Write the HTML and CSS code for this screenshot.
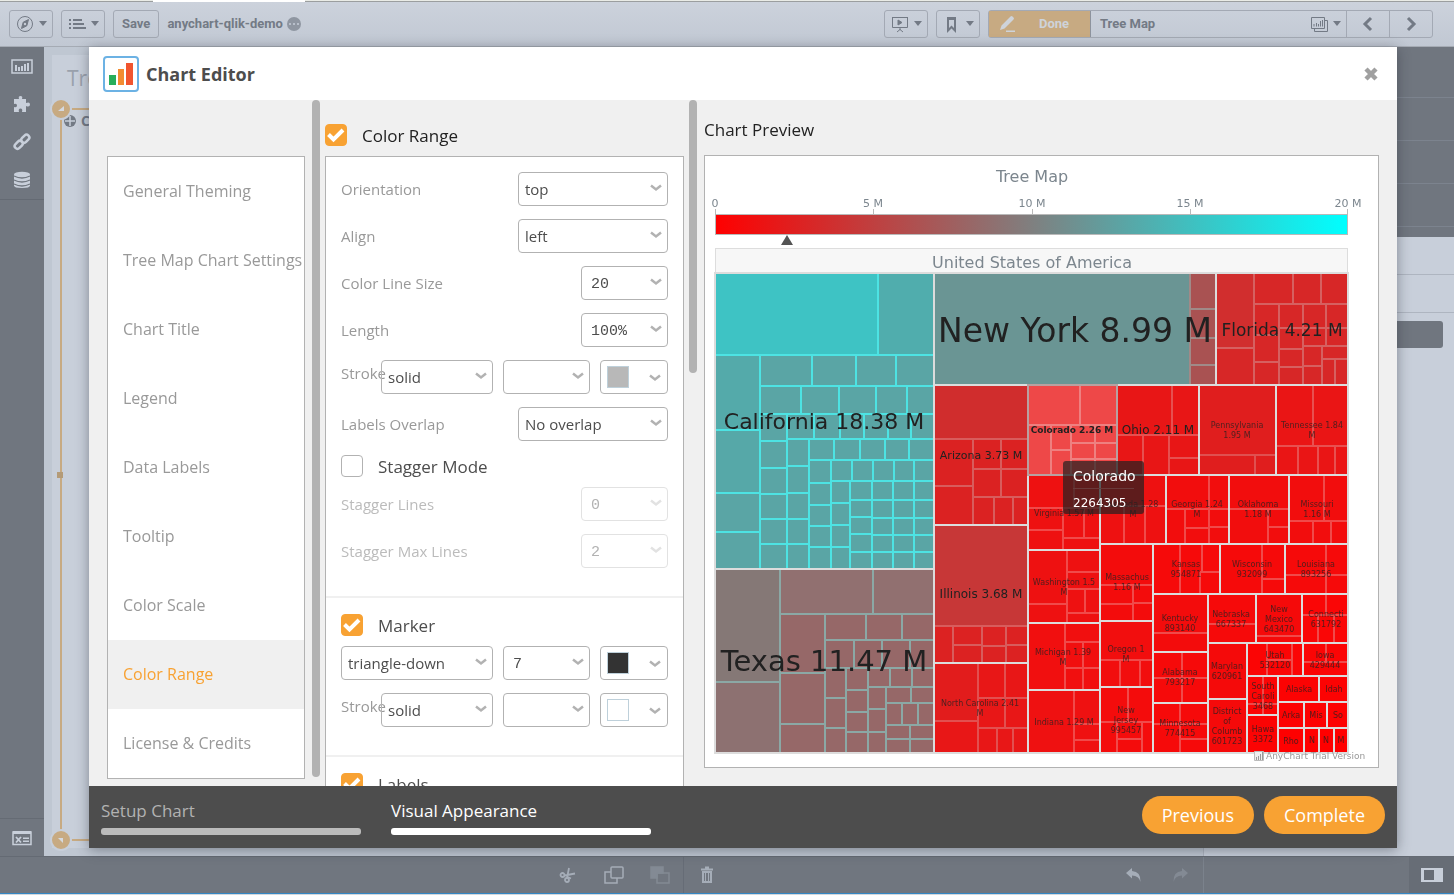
FILE: index.html
```html
<!DOCTYPE html>
<html lang="en">
<head>
  <meta charset="UTF-8">
  <meta name="viewport" content="width=device-width, initial-scale=1.0">
  <title>Chart Editor</title>
  <link rel="stylesheet" href="styles.css">
</head>
<body>
  <div class="app">
    <div class="tab-strip"><span class="tab-active"></span></div>

    <header class="toolbar">
      <button class="tool-btn" aria-label="Navigation">
        <svg width="18" height="18" viewBox="0 0 18 18" fill="none" stroke="currentColor"><circle cx="9" cy="9" r="7.5"/><path d="M12.5 4.5L10.8 10.8 5.5 13.5 7.2 7.2Z" fill="currentColor"/><circle cx="9" cy="9" r="1.2" fill="#c6ccd7" stroke="none"/></svg>
        <span class="caret"></span>
      </button>
      <button class="tool-btn" aria-label="Menu">
        <svg width="18" height="18" viewBox="0 0 18 18" fill="currentColor"><path d="M1 4h2v2H1zM1 8h2v2H1zM1 12h2v2H1zM5 4h9v2H5zM5 8h11v2H5zM5 12h13v2H5z"/></svg>
        <span class="caret"></span>
      </button>
      <button class="tool-btn save">Save</button>
      <span class="app-name">anychart-qlik-demo</span>
      <span class="app-dot"><i></i><i></i><i></i></span>
      <div class="toolbar-right">
        <button class="tool-btn" aria-label="Play story">
          <svg width="18" height="18" viewBox="0 0 18 18" fill="none" stroke="currentColor"><path d="M1 2.500H17M1.500 2.500V12.500H16.500V2.500M9 12.500V15M6 17L9 14.500 12 17"/><path d="M7 5L11 7.500 7 10Z" fill="currentColor"/></svg>
          <span class="caret"></span>
        </button>
        <button class="tool-btn" aria-label="Bookmarks">
          <svg width="18" height="18" viewBox="0 0 18 18" fill="none" stroke="currentColor" stroke-width="2"><path d="M5 3H12V15.500L8.500 12 5 15.500Z"/><path d="M5 3.500H12" stroke-width="3"/></svg>
          <span class="caret"></span>
        </button>
        <div class="sheet-bar">
          <button class="done-btn">
            <svg width="18" height="18" viewBox="0 0 18 18" fill="currentColor"><path d="M1 15L2.500 10.500 11.500 1.500Q12.500.5 13.500 1.500L14.500 2.500Q15.500 3.500 14.500 4.500L5.500 13.500ZM7 15.500H16V17H7Z"/></svg>
            <span>Done</span>
          </button>
          <span class="sheet-name">Tree Map</span>
          <button class="bar-btn" aria-label="Sheets">
            <svg width="18" height="18" viewBox="0 0 18 18" fill="none" stroke="currentColor"><path d="M1.500 2.500H14.500V13.500H1.500ZM14.500 5.500H17.500V16.500H4.500V13.500M4 11.500V9M6.500 11.500V8M8.500 11.500V9M10.500 11.500V6M12.500 11.500V5"/></svg>
            <span class="caret"></span>
          </button>
          <button class="bar-btn step" aria-label="Previous sheet">
            <svg width="14" height="16" viewBox="0 0 14 16" fill="none" stroke="currentColor" stroke-width="3"><path d="M10 2L4 8 10 14"/></svg>
          </button>
          <button class="bar-btn step" aria-label="Next sheet">
            <svg width="14" height="16" viewBox="0 0 14 16" fill="none" stroke="currentColor" stroke-width="3"><path d="M4 2L10 8 4 14"/></svg>
          </button>
        </div>
      </div>
    </header>

    <div class="workspace">
      <aside class="rail">
        <div class="rail-top">
          <svg width="22" height="16" viewBox="0 0 22 16"><path d="M1 1H21V14H1Z" fill="none" stroke="currentColor" stroke-width="1.500"/><path d="M4 6h2v6H4zM7 8h2v4H7zM10 7h2v5h-2zM13 5h2v7h-2zM16 4h2v8h-2z" fill="currentColor"/></svg>
          <svg width="18" height="18" viewBox="0 0 18 18" fill="currentColor"><path d="M1 4H6Q5 1 7.500 1T9 4H13V8Q17 6.500 17 9.500T13 11V17H9Q10 13.500 7.500 13.500T6 17H1V12Q4 13 4 10.500T1 9Z"/></svg>
          <svg width="18" height="18" viewBox="0 0 18 18" fill="none" stroke="currentColor" stroke-width="2.500"><rect x="-3.500" y="-2.800" width="9" height="5.600" rx="2.800" transform="translate(5 12.500) rotate(-45)"/><rect x="-5.500" y="-2.800" width="9" height="5.600" rx="2.800" transform="translate(13 5) rotate(-45)"/></svg>
          <svg width="18" height="18" viewBox="0 0 18 18"><path d="M1 3.500V14.500Q1 17 9 17T17 14.500V3.500Z" fill="currentColor"/><ellipse cx="9" cy="3.500" rx="8" ry="2.700" fill="currentColor"/><path d="M1 5Q9 9 17 5M1 9Q9 13 17 9M1 13Q9 17 17 13" fill="none" stroke="#70767f" stroke-width="1.300"/></svg>
        </div>
        <div class="rail-bottom">
          <svg width="20" height="16" viewBox="0 0 20 16"><path d="M1 2H19V14.500H1Z" fill="none" stroke="currentColor" stroke-width="1.500"/><path d="M1 1H19V4H1ZM11 7.500H17V9H11ZM11 10.500H17V12H11Z" fill="currentColor"/><path d="M4 7L9 12.500M9 7L4 12.500" stroke="currentColor" stroke-width="1.800"/></svg>
        </div>
      </aside>
      <main class="canvas">
        <div class="sheet">
          <h2>Tree Map</h2>
          <div class="object-title">
            <svg width="12" height="12" viewBox="0 0 12 12"><circle cx="6" cy="6" r="6" fill="currentColor"/><path d="M6 1V11M1 6H11" stroke="#c8cfda" stroke-width="1.500"/></svg>
            Chart
          </div>
          <span class="frame"></span>
          <svg class="handle handle-top" width="22" height="22" viewBox="0 0 22 22"><circle cx="11" cy="11" r="10"/><path d="M14 8V13H8Z"/></svg>
          <svg class="handle handle-bottom" width="22" height="22" viewBox="0 0 22 22"><circle cx="11" cy="11" r="10"/><path d="M8 9H13V14Z"/></svg>
          <span class="knob"></span>
        </div>
      </main>
      <aside class="props">
        <ul class="props-top"><li></li><li></li><li></li><li></li></ul>
        <div class="props-row"></div>
        <div class="props-row"></div>
        <div class="props-tab"></div>
      </aside>
    </div>

    <footer class="statusbar">
      <div class="edit-tools">
        <button class="icon-btn" aria-label="Cut"><svg width="18" height="18" viewBox="0 0 18 18" fill="none" stroke="currentColor" stroke-width="1.800"><circle cx="3.500" cy="9" r="2"/><circle cx="8" cy="14" r="2"/><path d="M5.500 9.500L16 7.500M8 12L10 2M8.500 11L12 12.500"/></svg></button>
        <button class="icon-btn" aria-label="Copy"><svg width="20" height="18" viewBox="0 0 20 18" fill="none" stroke="currentColor" stroke-width="1.500"><rect x="7" y="1" width="12" height="11" rx="1"/><path d="M7 6H1V17H13V12"/></svg></button>
        <button class="icon-btn dim" aria-label="Paste"><svg width="20" height="18" viewBox="0 0 20 18" fill="none" stroke="currentColor" stroke-width="1.500"><path d="M1 1H13V7H7V12H1Z" fill="currentColor"/><path d="M7 7H19V17H7Z"/></svg></button>
        <button class="icon-btn split" aria-label="Delete"><svg width="14" height="18" viewBox="0 0 14 18" fill="none" stroke="currentColor" stroke-width="2"><path d="M1 3.500H13M5 1.500H9M2 6H12M3 6V16H11V6"/><path d="M5.500 7V15M8.500 7V15" stroke-width="1"/></svg></button>
      </div>
      <div class="undo-tools">
        <button class="icon-btn" aria-label="Undo"><svg width="16" height="16" viewBox="0 0 16 16" fill="currentColor"><path d="M0 6L6 1V4Q15 4.500 14.500 15 13 8.500 6 8.500V11.500Z"/></svg></button>
        <button class="icon-btn dim" aria-label="Redo"><svg width="16" height="16" viewBox="0 0 16 16" fill="currentColor"><path d="M16 6L10 1V4Q1 4.500 1.500 15 3 8.500 10 8.500V11.500Z"/></svg></button>
      </div>
      <div class="panel-tools">
        <button class="panel-toggle" aria-label="Toggle panel"><svg width="22" height="14" viewBox="0 0 22 14"><path d="M0 0H22V14H0ZM3 2V12H13V2Z" fill="currentColor" fill-rule="evenodd"/></svg></button>
      </div>
    </footer>
    <div class="window-edge"></div>
  </div>

  <section class="modal" role="dialog" aria-labelledby="dialog-title">
    <header class="modal-header">
      <svg class="logo" width="36" height="36" viewBox="0 0 36 36"><rect x="1" y="1" width="34" height="34" rx="3" fill="#fff" stroke="#6cb2e4" stroke-width="2"/><path d="M6 19H13V29H6Z" fill="#27ae5b"/><path d="M15 13H21V29H15Z" fill="#f28c32"/><path d="M23 7H30V29H23Z" fill="#f1552f"/></svg>
      <h1 id="dialog-title">Chart Editor</h1>
      <button class="close" aria-label="Close"><svg width="16" height="16" viewBox="0 0 16 16"><path d="M3 3L13 13M13 3L3 13" stroke="#a0a0a0" stroke-width="4.500"/></svg></button>
    </header>

    <div class="modal-body">
      <div class="nav-col">
        <nav class="nav">
          <a href="#theming">General Theming</a>
          <a href="#settings">Tree Map Chart Settings</a>
          <a href="#title">Chart Title</a>
          <a href="#legend">Legend</a>
          <a href="#data-labels">Data Labels</a>
          <a href="#tooltip">Tooltip</a>
          <a href="#color-scale">Color Scale</a>
          <a href="#color-range" class="active">Color Range</a>
          <a href="#license">License &amp; Credits</a>
        </nav>
        <div class="scroll scroll-nav"></div>
      </div>

      <div class="form-col">
        <form class="settings">
          <label class="check check-main"><input type="checkbox" checked>Color Range</label>
          <div class="panel">
            <section class="group">
              <div class="row"><label for="orientation">Orientation</label><select id="orientation" class="wide"><option>top</option></select></div>
              <div class="row"><label for="align">Align</label><select id="align" class="wide"><option>left</option></select></div>
              <div class="row"><label for="line-size">Color Line Size</label><select id="line-size" class="num"><option>20</option></select></div>
              <div class="row"><label for="length">Length</label><select id="length" class="num"><option>100%</option></select></div>
              <div class="row trio">
                <label for="stroke" class="stroke-label">Stroke</label>
                <select id="stroke" class="grow"><option>solid</option></select>
                <select class="num" aria-label="Stroke thickness"><option></option></select>
                <button type="button" class="color" aria-label="Stroke color"><span class="swatch grey"></span></button>
              </div>
              <div class="row"><label for="overlap">Labels Overlap</label><select id="overlap" class="wide"><option>No overlap</option></select></div>
              <label class="check"><input type="checkbox">Stagger Mode</label>
              <div class="row disabled"><label for="stagger-lines">Stagger Lines</label><select id="stagger-lines" class="num" disabled><option>0</option></select></div>
              <div class="row disabled"><label for="stagger-max">Stagger Max Lines</label><select id="stagger-max" class="num" disabled><option>2</option></select></div>
            </section>
            <section class="group">
              <label class="check"><input type="checkbox" checked>Marker</label>
              <div class="row trio">
                <select class="grow" aria-label="Marker type"><option>triangle-down</option></select>
                <select class="num" aria-label="Marker size"><option>7</option></select>
                <button type="button" class="color" aria-label="Marker color"><span class="swatch dark"></span></button>
              </div>
              <div class="row trio">
                <label for="marker-stroke" class="stroke-label">Stroke</label>
                <select id="marker-stroke" class="grow"><option>solid</option></select>
                <select class="num" aria-label="Marker stroke thickness"><option></option></select>
                <button type="button" class="color" aria-label="Marker stroke color"><span class="swatch"></span></button>
              </div>
            </section>
            <section class="group">
              <label class="check"><input type="checkbox" checked>Labels</label>
            </section>
          </div>
        </form>
        <div class="scroll scroll-form"></div>
      </div>

      <div class="preview-col">
        <h3>Chart Preview</h3>
        <div class="preview">
          <svg id="chart" viewBox="705 156 673 611">
            <defs>
              <linearGradient id="range"><stop offset="0" stop-color="#f00"/><stop offset="1" stop-color="#0ff"/></linearGradient>
            </defs>
            <text class="title" x="1032" y="182">Tree Map</text>
            <g class="ticks">
              <path d="M715.500 209V214M873.500 209V214M1032.500 209V214M1190.500 209V214M1347.500 209V214"/>
              <text x="715" y="207">0</text>
              <text x="873" y="207">5 M</text>
              <text x="1032" y="207">10 M</text>
              <text x="1190" y="207">15 M</text>
              <text x="1348" y="207">20 M</text>
            </g>
            <rect x="715.500" y="214.500" width="632" height="20" fill="url(#range)" stroke="#b9b9b9"/>
            <path d="M787 235L793 245H781Z" fill="#545454"/>
            <rect x="715.500" y="248.500" width="632" height="24" fill="#f7f7f7" stroke="#ddd"/>
            <text class="title" x="1032" y="268">United States of America</text>
            <g id="cells"></g>
            <g id="labels"></g>
            <g class="tip">
              <rect x="1063" y="461" width="81" height="53" rx="3"/>
              <path d="M1073 488.500H1134"/>
              <text x="1073" y="481" class="tip-title">Colorado</text>
              <text x="1073" y="507">2264305</text>
            </g>
            <g class="credits">
              <path d="M1254.500 751.500H1263.500V760.500H1254.500Z" fill="#eee" stroke="#bbb"/>
              <path d="M1256 757h1v3h-1zM1258 756h1v4h-1zM1260 754h1v6h-1zM1262 752h1v8h-1z"/>
              <text x="1266" y="759">AnyChart Trial Version</text>
            </g>
          </svg>
        </div>
      </div>
    </div>

    <footer class="modal-footer">
      <a href="#setup" class="wizard-step">Setup Chart</a>
      <a href="#appearance" class="wizard-step current">Visual Appearance</a>
      <div class="actions">
        <button class="pill">Previous</button>
        <button class="pill">Complete</button>
      </div>
    </footer>
  </section>

  <script src="chart.js"></script>
</body>
</html>
```
FILE: chart.js
```js
// left, top, right, bottom, fill, inner line color, inner lines
const RED = '#ee1111';
const DEEP = '#f60a0a';
const LINE = '#f04a4a';
const cells = [
  [715, 273, 934, 569, '#5aa5a5', '#4de3e3', 'M878 273V355M715 355H934M760 355V569M812 355V386M856 355V386M896 355V386M760 386H934M801 386V414M839 386V414M876 386V414M907 386V414M760 414H934M715 430H760M715 493H760M715 532H760M787 414V569M814 414V439M840 414V439M864 414V439M888 414V439M911 414V439M787 439H934M760 441H787M760 468H787M760 494H787M760 519H787M760 544H787M809 439V569M787 466H809M787 493H809M787 519H809M787 544H809M834 439V460M860 439V460M885 439V460M909 439V460M809 460H934M831 460V569M852 460V481M873 460V481M894 460V481M914 460V481M831 481H934M809 483H831M809 505H831M809 526H831M809 547H831M850 481V569M831 503H850M831 525H850M831 547H850M872 481V569M893 481V569M914 481V569M850 500H934M850 517H872M850 534H872M850 552H934M872 518H934M872 535H934'],
  [715, 569, 934, 753, '#966868', '#8ba8a5', 'M780 569V753M715 682H780M780 614H934M873 569V614M825 614V753M780 673H825M780 724H825M866 614V640M902 614V640M825 640H934M854 640V668M882 640V668M910 640V668M825 668H934M846 668V753M825 698H846M825 728H846M868 668V753M846 690H868M846 712H868M846 732H868M890 668V687M912 668V687M868 687H934M886 687V753M868 709H886M868 732H886M886 703H934M911 687V703M886 725H934M902 703V725M918 703V725M910 725V753M886 739H934'],
  [934, 273, 1216, 385, '#6a9594', '#a08a88', 'M1190 273V385M1190 309H1216M1190 338H1216M1190 365H1216'],
  [1216, 273, 1348, 385, '#d72727', '#d66060', 'M1254 273V385M1216 348H1254M1254 304H1348M1293 273V304M1321 273V304M1279 304V385M1303 304V385M1326 304V346M1254 335H1279M1254 362H1279M1279 328H1348M1279 349H1303M1279 367H1303M1303 346H1348M1322 346V385M1303 366H1322M1322 359H1348M1335 359V385'],
  [934, 385, 1028, 525, '#db2222', '#d85c5c', 'M934 439H1028M973 439V525M934 486H973M973 469H1028M973 497H1028M1001 439V497M994 497V525M1013 497V525'],
  [934, 525, 1028, 663, '#dc2222', '#d85c5c', 'M934 626H1028M953 626V663M982 626V663M1006 626V663M953 645H982M982 646H1006M1006 645H1028'],
  [934, 663, 1028, 753, '#e81717', '#e25050', 'M978 663V753M934 721H978M978 698H1028M1005 663V728M978 728H1028M997 728V753M1013 728V753'],
  [1117, 385, 1199, 475, '#e81616', '#e65050', 'M1117 435H1199M1172 385V435M1143 435V475M1169 435V475M1169 458H1199'],
  [1199, 385, 1276, 475, '#e01e1e', '#e05050', 'M1199 455H1276M1255 455V475'],
  [1276, 385, 1348, 475, '#ea1515', '#e85050', 'M1276 446H1348M1313 385V446M1298 446V475M1318 446V475M1335 446V475'],
  [1028, 475, 1100, 550, RED, LINE, 'M1028 508H1100M1074 475V508M1063 508V550M1028 530H1063M1084 508V538M1063 538H1100'],
  [1100, 475, 1166, 544, RED, LINE, 'M1100 506H1166M1124 506V544M1145 506V544'],
  [1166, 475, 1229, 544, '#f20d0d', LINE, 'M1209 475V544M1166 509H1229M1185 509V544M1185 528H1209M1209 527H1229'],
  [1229, 475, 1289, 544, '#f20d0d', LINE, 'M1229 509H1289M1268 509V544M1268 527H1289'],
  [1289, 475, 1348, 544, '#f20d0d', LINE, 'M1289 521H1348M1324 475V521M1313 521V544M1331 521V544'],
  [1028, 550, 1100, 623, RED, LINE, 'M1067 550V623M1028 604H1067M1067 572H1100M1067 589H1100M1067 613H1100M1085 589V613'],
  [1028, 623, 1100, 690, '#f10f0f', LINE, 'M1065 623V690M1065 642H1100M1083 642V690M1065 668H1100'],
  [1028, 690, 1100, 753, '#ef1111', LINE, 'M1074 690V753M1074 724H1100M1074 740H1100'],
  [1100, 544, 1153, 621, '#f30c0c', LINE, 'M1100 585H1153M1133 585V621M1100 604H1133M1133 603H1153'],
  [1100, 621, 1153, 687, '#f20e0e', LINE, 'M1100 660H1153M1120 660V687M1140 660V687'],
  [1100, 687, 1153, 753, '#f40c0c', LINE, 'M1100 722H1153M1128 687V722M1117 722V753M1142 722V753M1117 739H1142'],
  [1153, 544, 1220, 594, DEEP, LINE, 'M1180 544V594M1202 544V572M1200 572V594M1200 572H1220'],
  [1220, 544, 1285, 594, DEEP, LINE, 'M1262 544V594M1262 579H1285'],
  [1285, 544, 1348, 594, DEEP, LINE, 'M1326 544V594M1285 575H1348'],
  [1153, 594, 1208, 652, '#f30c0c', LINE, 'M1153 633H1208'],
  [1153, 652, 1208, 703, DEEP, LINE, 'M1182 652V703M1153 678H1208'],
  [1153, 703, 1208, 753, DEEP, LINE, 'M1180 703V753M1153 724H1208M1180 739H1208'],
  [1208, 594, 1256, 643, DEEP, LINE, 'M1208 624H1256'],
  [1256, 594, 1302, 643, '#f50a0a', LINE, 'M1256 636H1302'],
  [1302, 594, 1348, 643, '#fa0606', LINE, 'M1326 594V615M1302 615H1348M1318 615V643M1334 615V643'],
  [1208, 643, 1247, 699, '#f50a0a', LINE, ''],
  [1208, 699, 1247, 753, '#f50a0a', LINE, ''],
  [1247, 643, 1303, 676, '#fb0505', LINE, 'M1267 643V676M1292 643V676M1267 660H1292'],
  [1303, 643, 1348, 676, '#fb0505', LINE, 'M1326 643V662M1303 662H1348'],
  [1247, 676, 1278, 715, '#fb0505', LINE, 'M1263 676V715M1247 704H1278'],
  [1247, 715, 1278, 753, '#fb0404', LINE, ''],
  [1278, 676, 1319, 702, '#fc0303', LINE, ''],
  [1319, 676, 1348, 702, '#fc0303', LINE, ''],
  [1278, 702, 1304, 728, '#fd0202', LINE, ''],
  [1304, 702, 1327, 728, '#fd0202', LINE, ''],
  [1327, 702, 1348, 728, '#fd0202', LINE, ''],
  [1278, 728, 1304, 753, '#fe0101', LINE, ''],
  [1304, 728, 1319, 753, '#ff0000', LINE, ''],
  [1319, 728, 1334, 753, '#ff0000', LINE, ''],
  [1334, 728, 1348, 753, '#ff0000', LINE, ''],
  [1028, 385, 1117, 475, '#ee4848', '#ee8080', 'M1028 425H1117M1080 385V425M1051 425V475M1071 425V475M1095 425V475M1051 450H1071M1071 443H1117M1071 459H1117', '#b9a0a0'],
];

// counties whose value sets them apart from the rest of their state
const counties = [
  [715, 273, 878, 355, '#3ec3c4'],
  [878, 273, 934, 355, '#50adad'],
  [715, 355, 760, 430, '#54aaaa'],
  [715, 430, 760, 493, '#56a8a8'],
  [715, 569, 780, 682, '#857876'],
  [715, 682, 780, 753, '#8d7171'],
  [780, 569, 934, 614, '#917070'],
  [1190, 273, 1216, 385, '#a95252'],
  [1216, 273, 1254, 348, '#d12e2e'],
  [934, 385, 1028, 439, '#d02d2d'],
  [934, 525, 1028, 626, '#c73737'],
  [934, 663, 978, 721, '#e21c1c'],
];

// center x, first line center y, font size, lines
const labels = [
  [824, 421, 22, 'California 18.38 M'],
  [824, 661, 29, 'Texas 11.47 M'],
  [1075, 330, 33, 'New York 8.99 M'],
  [1282, 330, 17, 'Florida 4.21 M'],
  [981, 455, 11, 'Arizona 3.73 M'],
  [981, 594, 12, 'Illinois 3.68 M'],
  [980, 703, 8, 'North Carolina 2.41', 'M'],
  [1158, 430, 12, 'Ohio 2.11 M'],
  [1237, 425, 8, 'Pennsylvania', '1.95 M'],
  [1312, 425, 8, 'Tennessee 1.84', 'M'],
  [1064, 513, 8, 'Virginia 1.57 M'],
  [1133, 504, 8, 'Nevada 1.28', 'M'],
  [1197, 504, 8, 'Georgia 1.24', 'M'],
  [1258, 504, 8, 'Oklahoma', '1.18 M'],
  [1317, 504, 8, 'Missouri', '1.16 M'],
  [1064, 582, 8, 'Washington 1.5', 'M'],
  [1127, 577, 8, 'Massachus', '1.16 M'],
  [1063, 652, 8, 'Michigan 1.39', 'M'],
  [1064, 722, 8, 'Indiana 1.29 M'],
  [1126, 649, 8, 'Oregon 1', 'M'],
  [1126, 710, 8, 'New', 'Jersey', '995457'],
  [1186, 564, 8, 'Kansas', '954871'],
  [1252, 564, 8, 'Wisconsin', '932099'],
  [1316, 564, 8, 'Louisiana', '893256'],
  [1180, 618, 8, 'Kentucky', '893140'],
  [1180, 672, 8, 'Alabama', '793217'],
  [1180, 723, 8, 'Minnesota', '774415'],
  [1231, 614, 8, 'Nebraska', '667337'],
  [1279, 609, 8, 'New', 'Mexico', '643470'],
  [1326, 614, 8, 'Connecti', '631792'],
  [1227, 666, 8, 'Marylan', '620961'],
  [1227, 711, 8, 'District', 'of', 'Columb', '601723'],
  [1275, 655, 8, 'Utah', '532120'],
  [1325, 655, 8, 'Iowa', '429444'],
  [1263, 686, 8, 'South', 'Caroli', '3468'],
  [1263, 729, 8, 'Hawa', '3372'],
  [1299, 689, 8, 'Alaska'],
  [1334, 689, 8, 'Idah'],
  [1291, 715, 8, 'Arka'],
  [1316, 715, 8, 'Mis'],
  [1338, 715, 8, 'So'],
  [1291, 741, 8, 'Rho'],
  [1312, 740, 8, 'N'],
  [1326, 740, 8, 'N'],
  [1341, 740, 8, 'M'],
];

function rect(c, fill, extra) {
  return `<rect x="${c[0]}" y="${c[1]}" width="${c[2] - c[0]}" height="${c[3] - c[1]}" fill="${fill}" ${extra || ''}/>`;
}

let shapes = '';
cells.forEach(c => { shapes += rect(c, c[4]); });
counties.forEach(c => { shapes += rect(c, c[4]); });
cells.forEach(c => { shapes += `<path d="${c[6]}" stroke="${c[5]}"/>`; });
cells.forEach(c => { shapes += rect(c, 'none', `stroke="${c[7] || '#dcdcdc'}"`); });
document.getElementById('cells').innerHTML = shapes;

let texts = '<text class="hovered" x="1072" y="433">Colorado 2.26 M</text>';
labels.forEach(([x, y, size, ...lines]) => {
  lines.forEach((line, i) => {
    const baseline = Math.round(y + size * 0.36) + i * 10;
    texts += `<text x="${x}" y="${baseline}" font-size="${size}"${size < 10 ? ' class="small"' : ''}>${line}</text>`;
  });
});
document.getElementById('labels').innerHTML = texts;
```
FILE: styles.css
```css
* {
  box-sizing: border-box;
}
body {
  margin: 0;
  font-family: "Open Sans", "Noto Sans", sans-serif;
  font-size: 16px;
  color: #4d4d4d;
}
button {
  font: inherit;
  color: inherit;
  background: none;
  border: none;
  padding: 0;
  cursor: pointer;
}
a {
  text-decoration: none;
}
svg {
  display: block;
}

/* app behind the dialog */
.app {
  height: 100vh;
  display: flex;
  flex-direction: column;
  overflow: hidden;
  background: #bfc7d2;
  color: #737a85;
}
.tab-strip {
  height: 2px;
  padding-left: 153px;
  background: #e9ebe6;
  border-bottom: 1px solid #9b9e9f;
}
.tab-active {
  display: block;
  width: 152px;
  height: 2px;
  background: #fff;
}
.toolbar {
  height: 45px;
  display: flex;
  align-items: center;
  gap: 8px;
  padding: 0 21px 1px 9px;
  background: linear-gradient(#ccd2dc, #c1c8d3);
  border-bottom: 1px solid #a5abb4;
  font-family: Roboto, sans-serif;
  font-size: 13px;
  font-weight: bold;
}
.tool-btn {
  height: 28px;
  min-width: 44px;
  display: flex;
  align-items: center;
  justify-content: center;
  gap: 5px;
  padding: 0 5px;
  border: 1px solid #a3a9b4;
  border-radius: 3px;
}
.save {
  padding: 0 8px;
}
.caret {
  border: 4px solid transparent;
  border-top: 5px solid #737a85;
  border-bottom: 0;
}
.app-dot {
  width: 14px;
  height: 14px;
  margin-left: -4px;
  display: flex;
  align-items: center;
  justify-content: center;
  gap: 2px;
  border-radius: 50%;
  background: #8f96a1;
}
.app-dot i {
  width: 2px;
  height: 2px;
  background: #b8bfca;
}
.toolbar-right {
  margin-left: auto;
  display: flex;
  gap: 8px;
}
.sheet-bar {
  display: flex;
  width: 445px;
  height: 28px;
  border: 1px solid #a3a9b4;
  border-radius: 3px;
}
.done-btn {
  width: 102px;
  display: flex;
  align-items: center;
  gap: 22px;
  padding-left: 10px;
  background: #c7aa82;
  color: #ced3da;
  border-right: 1px solid #8d939d;
}
.sheet-name {
  flex: 1;
  padding-left: 9px;
  line-height: 26px;
}
.bar-btn {
  display: flex;
  align-items: center;
  justify-content: center;
  gap: 5px;
  padding-right: 5px;
}
.step {
  width: 43px;
  padding: 0;
  border-left: 1px solid #a3a9b4;
}
.workspace {
  flex: 1;
  display: flex;
  min-height: 0;
}
.rail {
  width: 44px;
  display: flex;
  flex-direction: column;
  justify-content: space-between;
  background: #70767f;
  color: #c8cfda;
}
.rail-top {
  display: flex;
  flex-direction: column;
  align-items: center;
  gap: 20px;
  padding: 12px 0 10px;
  border-bottom: 1px solid #646a73;
}
.rail-bottom {
  display: flex;
  align-items: center;
  justify-content: center;
  height: 38px;
  border-top: 1px solid #656b74;
}
.canvas {
  flex: 1;
  padding: 8px 0 8px 8px;
}
.sheet {
  position: relative;
  height: 100%;
  background: #c8cfda;
}
.sheet h2 {
  margin: 0;
  padding: 6px 0 0 15px;
  font-size: 21px;
  font-weight: normal;
  line-height: 34px;
  color: #9aa1ac;
}
.object-title {
  display: flex;
  align-items: center;
  gap: 5px;
  padding-left: 12px;
  line-height: 52px;
  font-weight: bold;
  font-size: 14px;
}
.frame {
  position: absolute;
  inset: 53px 18px 7px 8px;
  border: 2px solid #c7aa82;
}
.handle {
  position: absolute;
  left: -2px;
}
.handle circle {
  fill: #c7aa82;
  stroke: #c8cfda;
  stroke-width: 2;
}
.handle path {
  fill: #d5d9df;
}
.handle-top {
  top: 43px;
}
.handle-bottom {
  bottom: -3px;
}
.knob {
  position: absolute;
  left: 5px;
  top: 417px;
  width: 6px;
  height: 6px;
  background: #b49b78;
}
.props {
  width: 251px;
  background: #c8cfda;
  border-left: 1px solid #aeb5c0;
}
.props-top {
  margin: 0;
  padding: 8px 0 10px;
  list-style: none;
  background: #70767f;
}
.props-top li {
  height: 43px;
  border-bottom: 1px solid #7c838e;
}
.props-row {
  height: 38px;
  border-bottom: 1px solid #aeb5c0;
}
.props-tab {
  height: 27px;
  margin: 8px 11px 0 0;
  border-radius: 3px;
  background: #70767f;
}
.statusbar {
  height: 37px;
  display: flex;
  background: #70767f;
  border-top: 1px solid #646a73;
  color: #a5adb8;
}
.edit-tools {
  flex: 1;
  display: flex;
  justify-content: center;
  padding-left: 163px;
}
.icon-btn {
  width: 46px;
  display: flex;
  align-items: center;
  justify-content: center;
}
.dim {
  color: #838a94;
}
.split {
  border-left: 1px solid #666c76;
}
.undo-tools {
  display: flex;
}
.panel-tools {
  width: 251px;
  display: flex;
  justify-content: flex-end;
  border-left: 1px solid #7b828c;
}
.panel-toggle {
  width: 45px;
  display: flex;
  align-items: center;
  justify-content: center;
  background: #676d76;
  color: #c8cfda;
}
.window-edge {
  height: 2px;
  background: #d4d8dc;
  border-top: 1px solid #3487c4;
}

/* dialog */
.modal {
  position: fixed;
  inset: 47px 57px 47px 89px;
  display: flex;
  flex-direction: column;
  background: #f0f0f0;
  box-shadow: 0 2px 12px rgba(40, 45, 55, 0.45);
}
.modal-header {
  height: 53px;
  display: flex;
  align-items: center;
  gap: 7px;
  padding: 0 18px 0 14px;
  background: #fff;
}
.modal-header h1 {
  margin: 0;
  font-size: 18px;
}
.close {
  margin-left: auto;
}
.modal-body {
  flex: 1;
  min-height: 0;
  display: grid;
  grid-template-columns: 231px 377px 1fr;
  overflow: hidden;
}
.scroll {
  width: 8px;
  border-radius: 4px;
  background: #b2b2b2;
}
.scroll-nav {
  height: 677px;
}
.scroll-form {
  height: 273px;
}

.nav-col,
.form-col {
  display: flex;
  min-height: 0;
  justify-content: space-between;
}
.nav {
  width: 198px;
  margin: 56px 0 7px 18px;
  background: #fff;
  border: 1px solid #b2b2b2;
}
.nav a {
  display: block;
  padding-left: 15px;
  line-height: 69px;
  white-space: nowrap;
  color: #999;
}
.nav .active {
  background: #f0f0f0;
  color: #f8a233;
}

.settings {
  width: 359px;
  margin-left: 5px;
}
.check {
  display: flex;
  align-items: center;
  gap: 15px;
  height: 24px;
  font-size: 17px;
}
.check-main {
  margin: 23px 0 9px;
  color: #222;
}
.check input {
  appearance: none;
  width: 22px;
  height: 22px;
  margin: 0;
  border: 1px solid #b2b2b2;
  border-radius: 4px;
  background: #fff;
}
.check input:checked {
  border-color: #f8a233;
  background: #f8a233 url('data:image/svg+xml,<svg xmlns="http://www.w3.org/2000/svg" viewBox="0 0 20 20"><path d="M2.500 9.500L7.500 14.500L17 5" fill="none" stroke="white" stroke-width="4"/></svg>') center / 20px no-repeat;
}
.panel {
  background: #fff;
  border: 1px solid #b2b2b2;
}
.group {
  display: flex;
  flex-direction: column;
  gap: 13px;
  padding: 15px 15px 28px;
  border-bottom: 2px solid #f0f0f0;
}
.group .check + .row {
  margin-top: -4px;
}
.row {
  display: flex;
  align-items: center;
  justify-content: space-between;
  font-size: 15px;
  color: #999;
}
.trio {
  gap: 10px;
}
.stroke-label {
  width: 30px;
  align-self: flex-start;
  line-height: 27px;
}
select,
.color {
  height: 34px;
  border: 1px solid #b2b2b2;
  border-radius: 4px;
  color: #4d4d4d;
  background: transparent url('data:image/svg+xml,<svg xmlns="http://www.w3.org/2000/svg" viewBox="0 0 12 8"><path d="M1 1.500L6 5.500L11 1.500" fill="none" stroke="%23b2b2b2" stroke-width="2.500"/></svg>') right 5px top 11px / 12px 8px no-repeat;
}
select {
  appearance: none;
  padding: 0 20px 0 6px;
  font-family: inherit;
  font-size: 15px;
}
.wide {
  width: 150px;
}
.num {
  width: 87px;
  padding-top: 2px;
  padding-left: 9px;
  font-family: "Liberation Mono", monospace;
}
.grow {
  flex: 1;
  min-width: 0;
}
.color {
  width: 68px;
  padding-left: 6px;
  background-position: right 6px top 13px;
}
.swatch {
  display: block;
  width: 22px;
  height: 22px;
  border: 1px solid #bed0da;
}
.swatch.grey {
  background: #b8b8b8;
}
.swatch.dark {
  background: #333;
}
.disabled {
  color: #bbb;
}
.disabled select {
  opacity: 1;
  color: #b2b2b2;
  border-color: #e2e2e2;
  background-image: url('data:image/svg+xml,<svg xmlns="http://www.w3.org/2000/svg" viewBox="0 0 12 8"><path d="M1 1.500L6 5.500L11 1.500" fill="none" stroke="%23e2e2e2" stroke-width="2.500"/></svg>');
}

.preview-col {
  padding: 0 18px 18px 7px;
}
.preview-col h3 {
  margin: 0;
  padding: 18px 0 13px;
  font-size: 17px;
  font-weight: normal;
  line-height: 24px;
  color: #222;
}
.preview {
  background: #fff;
  border: 1px solid #b2b2b2;
}
#chart {
  width: 100%;
  font-family: "DejaVu Sans", sans-serif;
}
.title {
  font-size: 16px;
  fill: #7c868e;
  text-anchor: middle;
}
.ticks {
  font-size: 11px;
  fill: #7c868e;
  stroke: none;
  text-anchor: middle;
}
.ticks path {
  stroke: #b9b9b9;
}
#cells {
  stroke-width: 2;
  fill: none;
  shape-rendering: crispEdges;
}
#labels {
  fill: #212121;
  text-anchor: middle;
}
#labels .small {
  fill-opacity: 0.75;
}
#labels .hovered {
  font-size: 9px;
  font-weight: bold;
}
.tip rect {
  fill: #212121;
  fill-opacity: 0.7;
}
.tip path {
  stroke: #6a3a3a;
}
.tip text {
  font-size: 12px;
  fill: #fff;
}
.tip .tip-title {
  font-size: 14px;
}
.credits {
  font-size: 9px;
  fill: #999;
}

.modal-footer {
  height: 62px;
  display: flex;
  gap: 30px;
  padding: 10px 12px;
  background: #4d4d4d;
}
.wizard-step {
  width: 260px;
  font-size: 17px;
  line-height: 30px;
  color: #b2b2b2;
}
.wizard-step::after {
  content: "";
  display: block;
  height: 7px;
  margin-top: 2px;
  border-radius: 3px;
  background: #bbb;
}
.wizard-step.current {
  color: #fff;
}
.wizard-step.current::after {
  background: #fff;
}
.actions {
  margin-left: auto;
  display: flex;
  gap: 10px;
}
.pill {
  height: 38px;
  padding: 0 20px;
  border-radius: 19px;
  background: #f8a233;
  color: #fff;
  font-size: 18px;
}
```
